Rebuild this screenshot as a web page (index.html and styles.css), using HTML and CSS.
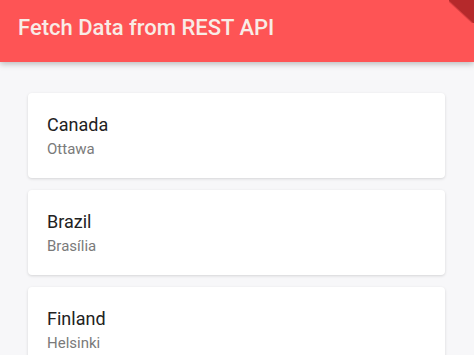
FILE: index.html
```html
<!DOCTYPE html>
<html lang="en">
<head>
	<meta charset="UTF-8">
	<title>Fetch Data from REST API</title>
	<link rel="stylesheet" href="styles.css">
</head>
<body>
	<header class="appbar">
		<h1 class="title">Fetch Data from REST API</h1>
		<div class="banner"></div>
	</header>
	<main class="list">
		<div class="card">
			<div class="name">Canada</div>
			<div class="capital">Ottawa</div>
		</div>
		<div class="card">
			<div class="name">Brazil</div>
			<div class="capital">Brasília</div>
		</div>
		<div class="card">
			<div class="name">Finland</div>
			<div class="capital">Helsinki</div>
		</div>
	</main>
</body>
</html>
```

FILE: styles.css
```css
html, body{
	margin:0;
	height:100%;
	overflow:hidden;
}
body{
	background:#f7f7f9;
	font-family:Roboto, "Liberation Sans", sans-serif;
}
.appbar{
	position:relative;
	height:62px;
	background:#fe5455;
	box-shadow:0 2px 6px rgba(0,0,0,0.25);
	z-index:1;
}
.title{
	margin:0;
	padding:14px 0 0 18px;
	font-size:22px;
	font-weight:500;
	line-height:28px;
	color:#f8ece6;
}
/* debug banner corner */
.banner{
	position:absolute;
	top:0;
	right:0;
	width:25px;
	height:23px;
	background:linear-gradient(to bottom left, #b5292b 50%, transparent 56%);
}
.list{
	padding:31px 29px 0 28px;
	display:flex;
	flex-direction:column;
	gap:12px;
}
.card{
	height:85px;
	box-sizing:border-box;
	padding:20px 19px 0;
	background:#fff;
	border-radius:4px;
	box-shadow:0 1px 3px rgba(0,0,0,0.14);
}
.name{
	font-size:18px;
	line-height:24px;
	color:#222;
}
.capital{
	margin-top:2px;
	font-size:15px;
	line-height:20px;
	color:#7a7a7a;
}
```
